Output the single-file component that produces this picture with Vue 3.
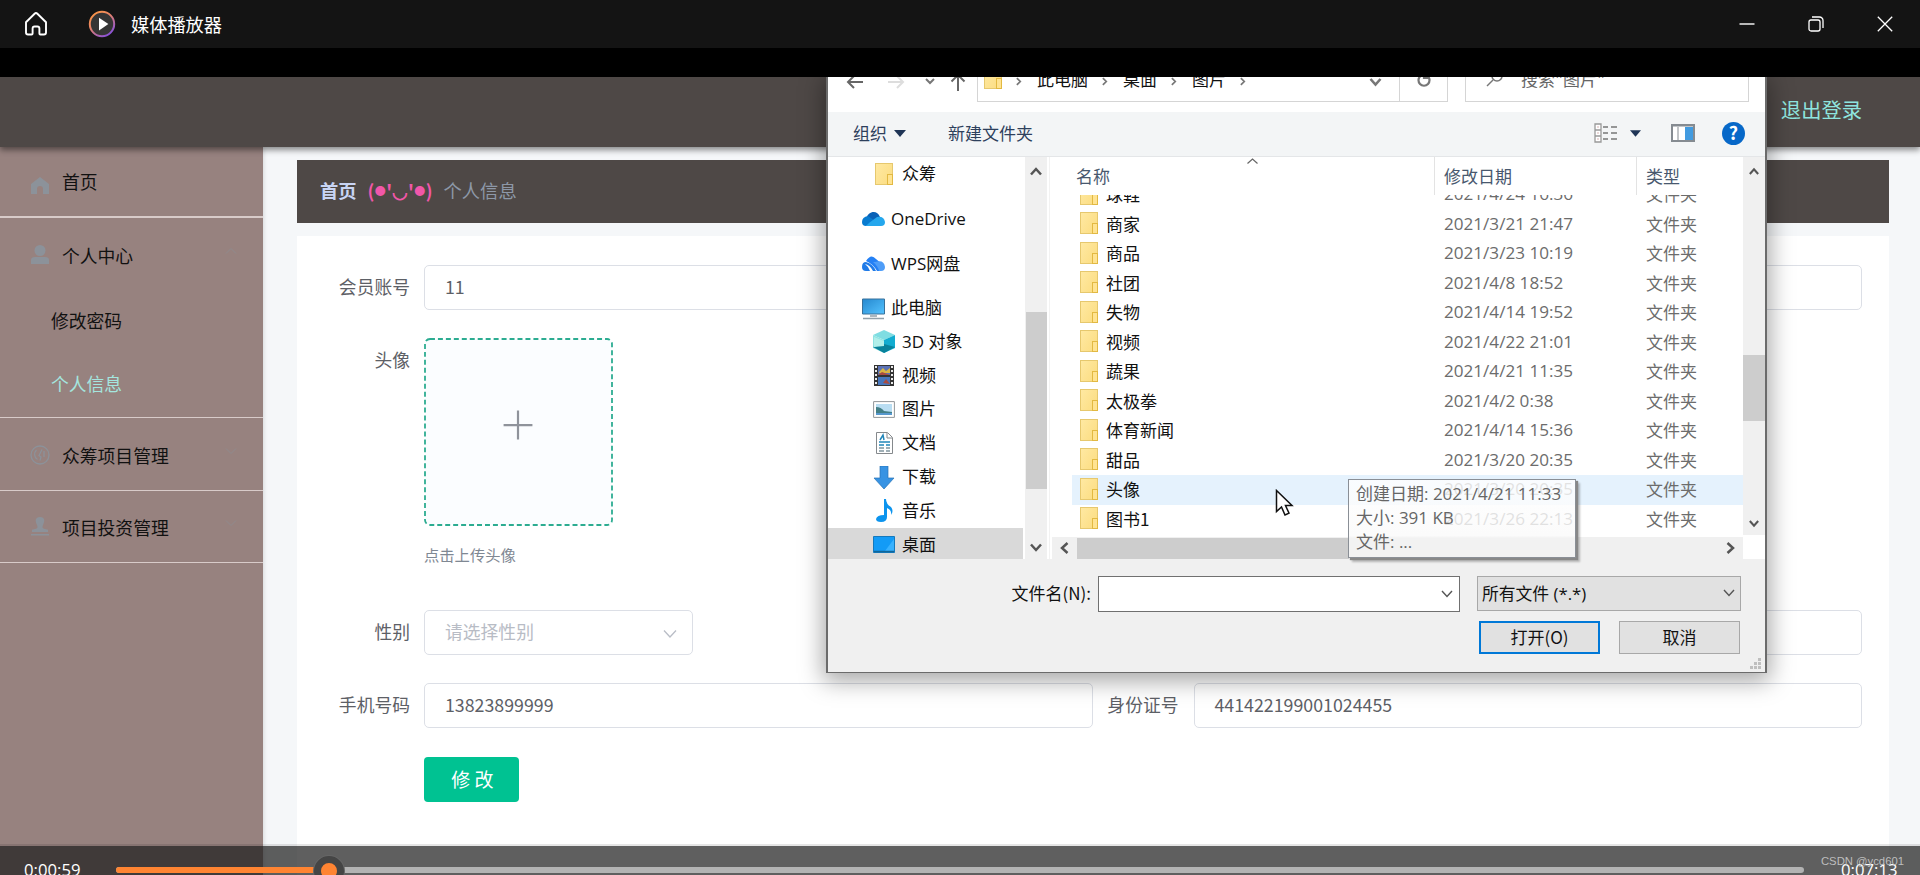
<template>
  <div class="player">
    <div class="title-bar">
      <svg class="home-icon" width="24" height="24" viewBox="0 0 24 24">
        <path d="M2 10.2 10.6 1.8a2 2 0 0 1 2.8 0L22 10.2V20.5a2 2 0 0 1-2 2h-3.6a1 1 0 0 1-1-1v-5a2 2 0 0 0-2-2h-2.8a2 2 0 0 0-2 2v5a1 1 0 0 1-1 1H4a2 2 0 0 1-2-2z" fill="none" stroke="#fff" stroke-width="1.9" />
      </svg>
      <svg class="app-icon" width="28" height="28" viewBox="0 0 28 28">
        <defs>
          <linearGradient id="ring" x1="0" y1="0" x2=".7" y2="1">
            <stop offset="0" stop-color="#ff9a3c" />
            <stop offset=".45" stop-color="#e88468" />
            <stop offset="1" stop-color="#8a52d8" />
          </linearGradient>
        </defs>
        <circle cx="14" cy="14" r="12.2" fill="#353535" stroke="url(#ring)" stroke-width="2" />
        <path d="M11 7.8v12.6l9.4-6.3z" fill="#fff" />
      </svg>
      <span class="app-name">媒体播放器</span>
      <div class="window-buttons">
        <svg width="16" height="16" viewBox="0 0 16 16"><path d="M.5 8h15" stroke="#fff" stroke-width="1.4" /></svg>
        <svg width="16" height="16" viewBox="0 0 16 16" fill="none" stroke="#fff" stroke-width="1.3">
          <rect x="1" y="4" width="11" height="11" rx="2" />
          <path d="M4 1h7.5A3.5 3.5 0 0 1 15 4.5V12" />
        </svg>
        <svg width="16" height="16" viewBox="0 0 16 16"><path d="M.8.8l14.4 14.4M15.2.8.8 15.2" stroke="#fff" stroke-width="1.3" /></svg>
      </div>
    </div>

    <div class="video">
      <header class="top-header">
        <a class="logout">退出登录</a>
      </header>

      <div class="main">
        <aside class="sidebar">
          <div class="menu-item home">
            <svg width="18" height="18" viewBox="0 0 18 18"><path d="M9 1 0 8v10h6v-5a3 3 0 0 1 6 0v5h6V8z" fill="#8c929a" /></svg>
            <span>首页</span>
          </div>
          <div class="menu-group">
            <div class="menu-item center">
              <svg width="18" height="20" viewBox="0 0 18 20" fill="#8c929a"><circle cx="9" cy="5.5" r="5.5" /><path d="M0 19v-4q0-3 4-3h10q4 0 4 3v4z" /></svg>
              <span>个人中心</span>
              <svg class="arrow" width="12" height="8" viewBox="0 0 12 8"><path d="M1 6.5 6 1.5l5 5" fill="none" stroke="#908b8e" /></svg>
            </div>
            <div class="sub-item">修改密码</div>
            <div class="sub-item active">个人信息</div>
          </div>
          <div class="menu-item">
            <svg width="20" height="20" viewBox="0 0 20 20" fill="none" stroke="#8c929a" stroke-width="1.3"><circle cx="10" cy="10" r="9" /><path d="M6.5 5a6 6 0 0 0 1 9.5M12 4.5 9 10.5l2 1.5-1 3.5M14 6v6" /></svg>
            <span>众筹项目管理</span>
            <svg class="arrow" width="12" height="8" viewBox="0 0 12 8"><path d="M1 1.5l5 5 5-5" fill="none" stroke="#908b8e" /></svg>
          </div>
          <div class="menu-item last">
            <svg width="20" height="19" viewBox="0 0 20 19" fill="#8c929a"><path d="M10 0c5 0 5 4 3 8-1 2-.5 3.5 1 3.8l4 1V15H2v-2.2l4-1c1.5-.3 2-1.8 1-3.8C5 4 5 0 10 0zM1 17h18v1.5H1z" /></svg>
            <span>项目投资管理</span>
            <svg class="arrow" width="12" height="8" viewBox="0 0 12 8"><path d="M1 1.5l5 5 5-5" fill="none" stroke="#908b8e" /></svg>
          </div>
        </aside>

        <section class="content">
          <div class="breadcrumb">
            <b>首页</b>
            <span class="face">(<i>●</i>'◡'<i>●</i>)</span>
            <span class="crumb">个人信息</span>
          </div>
          <div class="card">
            <div class="form-row">
              <label>会员账号</label>
              <div class="field">11</div>
              <label></label>
              <div class="field"></div>
            </div>
            <div class="form-row avatar">
              <label>头像</label>
              <div>
                <div class="upload">
                  <svg width="189" height="188" viewBox="0 0 190 189">
                    <rect x="1" y="1" width="188" height="187" rx="5" fill="#fbfdff" stroke="#2cac91" stroke-width="1.8" stroke-dasharray="5 3" />
                    <path d="M80 87.5h29M94.500 73v29" stroke="#8f939b" stroke-width="2.2" />
                  </svg>
                </div>
                <p class="tip">点击上传头像</p>
              </div>
            </div>
            <div class="form-row">
              <label>性别</label>
              <div class="field select">
                <span>请选择性别</span>
                <svg width="14" height="10" viewBox="0 0 14 10"><path d="M1 1.5l6 6.5 6-6.5" fill="none" stroke="#b9bdc6" stroke-width="1.3" /></svg>
              </div>
              <div class="gap"></div>
              <label></label>
              <div class="field"></div>
            </div>
            <div class="form-row phone">
              <label>手机号码</label>
              <div class="field">13823899999</div>
              <label>身份证号</label>
              <div class="field">441422199001024455</div>
            </div>
            <button class="submit">修 改</button>
          </div>
        </section>
      </div>

      <!-- file picker -->
      <div class="dialog">
        <div class="address-row">
          <div class="nav-arrows">
            <svg width="18" height="16" viewBox="0 0 18 16"><path d="M17 8H2M8 2 2 8l6 6" fill="none" stroke="#666" stroke-width="2" /></svg>
            <svg width="18" height="16" viewBox="0 0 18 16"><path d="M1 8h15M10 2l6 6-6 6" fill="none" stroke="#ddd" stroke-width="2" /></svg>
            <svg width="10" height="8" viewBox="0 0 10 8"><path d="M1 1l4 4 4-4" fill="none" stroke="#777" stroke-width="2" /></svg>
            <svg width="16" height="18" viewBox="0 0 16 18"><path d="M8 18V2M1.5 8.5 8 2l6.5 6.5" fill="none" stroke="#666" stroke-width="2" /></svg>
          </div>
          <div class="address">
            <i class="folder"></i>
            <template v-for="part in ['此电脑', '桌面', '图片']" :key="part">
              <svg class="sep" width="6" height="9" viewBox="0 0 7 10"><path d="M1 1l4 4-4 4" fill="none" stroke="#777" stroke-width="2" /></svg>
              <span>{{ part }}</span>
            </template>
            <svg class="sep" width="6" height="9" viewBox="0 0 7 10"><path d="M1 1l4 4-4 4" fill="none" stroke="#777" stroke-width="2" /></svg>
            <svg class="drop" width="13" height="9" viewBox="0 0 12 9"><path d="M1 1l5 5.5L11 1" fill="none" stroke="#777" stroke-width="2.6" /></svg>
            <div class="refresh">
              <svg width="14" height="16" viewBox="0 0 14 16"><path d="M10.5 4a5.500 5.500 0 1 1-7 0M7 0v6h4" fill="none" stroke="#777" stroke-width="2.2" /></svg>
            </div>
          </div>
          <div class="search">
            <svg width="18" height="18" viewBox="0 0 18 18"><path d="M1 17l6-6" stroke="#777" stroke-width="1.5" /><circle cx="11" cy="7" r="5" fill="none" stroke="#777" stroke-width="1.5" /></svg>
            <span>搜索"图片"</span>
          </div>
        </div>

        <div class="toolbar">
          <span>组织</span>
          <svg width="12" height="7" viewBox="0 0 12 7"><path d="M0 0h12L6 7z" fill="#1f3556" /></svg>
          <span class="new-folder">新建文件夹</span>
          <div class="view-tools">
            <svg width="24" height="20" viewBox="0 0 24 20"><path d="M1 1h6v18H1zM1 7h6M1 13h6" fill="#fff" stroke="#999" stroke-width="1.3" /><path d="M9 4h5m3 0h6M9 10h5m3 0h6M9 16h5m3 0h6" stroke="#777" stroke-width="1.5" /><path d="M3.5 9.5h1v1h-1zm0 6h1v1h-1zm0-12h1v1h-1z" fill="#a66" /></svg>
            <svg class="caret" width="11" height="7" viewBox="0 0 12 7"><path d="M0 0h12L6 7z" fill="#1f3556" /></svg>
            <svg class="preview" width="24" height="18" viewBox="0 0 24 18"><path d="M1 1h22v16H1z" fill="#fff" stroke="#858b91" stroke-width="2" /><path d="M14 3h8v13h-8z" fill="#429be0" /><path d="M7 3v14M1 2h22" stroke="#858b91" /></svg>
            <span class="help">?</span>
          </div>
        </div>

        <div class="panes">
          <div class="tree">
            <div v-for="item in places" :key="item.name" class="tree-item" :class="[item.icon, { root: item.root }]">
              <span class="tree-icon">
                <i v-if="item.icon === 'folder-item'" class="folder"></i>
                <svg v-else-if="item.icon === 'onedrive'" width="23" height="16" viewBox="0 0 23 16"><path d="M4 8C6 0 15-2 18 6l-8 5z" fill="#0961b7" /><path d="M0 11q0-5 6-6l10 7-12 3q-4 0-4-4z" fill="#087bd0" /><path d="M7 12l8-6q7-1 8 5 0 4-4 4H4z" fill="#25a7ed" /></svg>
                <svg v-else-if="item.icon === 'wps'" width="23" height="16" viewBox="0 0 23 16"><path d="M4 5Q9-3 14 3l7 6-3 6h-3Q11 8 4 5z" fill="#2480f5" /><path d="M13 6q9-3 10 5 0 4-4 4h-2Q16 10 11 6z" fill="#4e9df8" /><path d="M0 11q0-5 4-5 7 2 10 9h-3Q8 9 3 8q4 3 5 7H4q-4 0-4-4z" fill="#207be8" /></svg>
                <svg v-else-if="item.icon === 'pc'" width="23" height="23" viewBox="0 0 23 23"><defs><linearGradient id="scr" x2="1" y2="1"><stop stop-color="#2588cf" /><stop offset="1" stop-color="#55c3ff" /></linearGradient></defs><path d="M.5 2h22v15H.5z" fill="url(#scr)" stroke="#39719a" /><path d="M8 19h7M1 21.5h21" stroke="#91a0aa" stroke-width="1.5" /></svg>
                <svg v-else-if="item.icon === 'cube'" width="22" height="23" viewBox="0 0 22 23"><path d="M0 5l11-5 11 5-11 5z" fill="#7fdde2" /><path d="M0 5l11 5v13L0 18z" fill="#8fe3e2" /><path d="M22 5l-11 5v13l11-5z" fill="#12acd0" /><path d="M0 17l11-3 11 3-11 6z" fill="#08829b" /><path d="M1 7l10 4v5L1 17z" fill="#b0efea" /></svg>
                <svg v-else-if="item.icon === 'film'" width="20" height="21" viewBox="0 0 20 21"><path d="M0 0h20v21H0z" fill="#343434" /><path d="M4 1h12v9H4z" fill="#5b72b5" /><path d="M4 12h12v8H4z" fill="#4777bd" /><path d="M5 7l4-4 3 3 4-3v5H5z" fill="#d8b544" /><path d="M4 10l4-3 8 3M9 18l3-4 4 5z" fill="#a94b41" /><path d="M2 1v20M18 1v20" stroke="#fff" stroke-width="1.8" stroke-dasharray="2 2" /></svg>
                <svg v-else-if="item.icon === 'picture'" width="22" height="17" viewBox="0 0 22 17"><path d="M.6.6h20.8v15.8H.6z" fill="#fff" stroke="#929699" /><path d="M3 3h16v11H3z" fill="#b9ddf2" /><path d="M3 6q5 0 8 4l8 1v3H3z" fill="#437f86" /><path d="M3 12h16v2H3z" fill="#5798ce" /></svg>
                <svg v-else-if="item.icon === 'doc'" width="17" height="22" viewBox="0 0 17 22"><path d="M.5.5h11l5 5v16H.5z" fill="#fff" stroke="#85898c" /><path d="M11 1v5h5" fill="none" stroke="#85898c" /><path d="M4 8l3-5 1 5M3 10h11M3 13h5m2 0h4" fill="none" stroke="#2286b9" stroke-width="1.5" /><path d="M3 16h5m2 0h4M3 19h5m2 0h4" stroke="#80959e" stroke-width="1.5" /></svg>
                <svg v-else-if="item.icon === 'download'" width="22" height="23" viewBox="0 0 22 23"><path d="M7 0h8v12h6L11 23 1 12h6z" fill="#3793e3" stroke="#2872b5" stroke-width=".7" /></svg>
                <svg v-else-if="item.icon === 'music'" width="17" height="23" viewBox="0 0 17 23"><path d="M8 0h2q0 5 5 8 3 4 0 8 1-5-4-7v9q0 5-6 5-5 0-5-3 1-4 8-4z" fill="#0c94ee" /></svg>
                <svg v-else width="22" height="17" viewBox="0 0 22 17"><path d="M.5.5h21v16H.5z" fill="#139bf6" stroke="#1479bd" /><path d="M12 15 21 3v12z" fill="#38b2ff" /><path d="M1 15.5h20" stroke="#116698" stroke-width="1.5" /></svg>
              </span>
              <span>{{ item.name }}</span>
            </div>
          </div>
          <div class="v-scroll tree-scroll">
            <svg width="12" height="9" viewBox="0 0 12 9"><path d="M1 7.5l5-5.500 5 5.500" fill="none" stroke="#555" stroke-width="2.5" /></svg>
            <i></i>
            <svg width="12" height="9" viewBox="0 0 12 9"><path d="M1 1.5 6 7l5-5.500" fill="none" stroke="#555" stroke-width="2.5" /></svg>
          </div>

          <div class="list">
            <div class="list-head">
              <span class="col-name">名称
                <svg width="11" height="6" viewBox="0 0 11 6"><path d="M.5 5.5l5-4.500 5 4.500" fill="none" stroke="#666" stroke-width="1.2" /></svg>
              </span>
              <span class="col-date">修改日期</span>
              <span class="col-type">类型</span>
            </div>
            <div class="rows">
              <div v-for="file in files" :key="file.name" class="row" :class="{ hover: file.name === '头像' }">
                <span class="cell-name"><i class="folder"></i>{{ file.name }}</span>
                <span class="cell-date">{{ file.date }}</span>
                <span class="cell-type">文件夹</span>
              </div>
            </div>
            <div class="h-scroll">
              <svg width="9" height="12" viewBox="0 0 9 12"><path d="M7.5 1 2 6l5.500 5" fill="none" stroke="#555" stroke-width="2.5" /></svg>
              <i></i>
              <svg width="9" height="12" viewBox="0 0 9 12"><path d="M1.5 1 7 6l-5.500 5" fill="none" stroke="#555" stroke-width="2.5" /></svg>
            </div>
          </div>
          <div class="v-scroll list-scroll">
            <svg width="10" height="9" viewBox="0 0 12 9"><path d="M1 7.5l5-5.500 5 5.500" fill="none" stroke="#555" stroke-width="2.5" /></svg>
            <i></i>
            <svg width="10" height="9" viewBox="0 0 12 9"><path d="M1 1.5 6 7l5-5.500" fill="none" stroke="#555" stroke-width="2.5" /></svg>
          </div>
        </div>

        <div class="dialog-footer">
          <div class="file-line">
            <label>文件名(N):</label>
            <div class="combo">
              <svg width="12" height="8" viewBox="0 0 12 8"><path d="M1 1l5 5.500L11 1" fill="none" stroke="#555" stroke-width="1.4" /></svg>
            </div>
            <div class="combo type">
              <span>所有文件 (*.*)</span>
              <svg width="12" height="8" viewBox="0 0 12 8"><path d="M1 1l5 5.500L11 1" fill="none" stroke="#555" stroke-width="1.4" /></svg>
            </div>
          </div>
          <div class="buttons">
            <button class="open">打开(O)</button>
            <button>取消</button>
          </div>
          <svg class="grip" width="12" height="12" viewBox="0 0 12 12"><path d="M8 0h3v3H8zM8 4h3v3H8zM8 8h3v3H8zM4 4h3v3H4zM4 8h3v3H4zM0 8h3v3H0z" fill="#bfbfbf" /></svg>
        </div>

        <div class="tooltip">
          <p>创建日期: 2021/4/21 11:33</p>
          <p>大小: 391 KB</p>
          <p>文件: ...</p>
        </div>
        <svg class="cursor" width="19" height="28" viewBox="0 0 19 28"><path d="M1.5 1.5v21l5-4.500 3.500 8 4-1.800-3.500-7.700H17z" fill="#fff" stroke="#111" stroke-width="1.5" /></svg>
      </div>
    </div>

    <div class="controls">
      <span class="time">0:00:59</span>
      <div class="track">
        <div class="played" :style="{ width: progress + '%' }"><i class="knob"></i></div>
      </div>
      <span class="time">0:07:13</span>
      <span class="watermark">CSDN @ycd601</span>
    </div>
  </div>
</template>

<script setup>
import { computed } from 'vue';

const played = 213;
const trackWidth = 1688;
const progress = computed(() => (played / trackWidth) * 100);

const places = [
  { name: '众筹', icon: 'folder-item' },
  { name: 'OneDrive', icon: 'onedrive', root: true },
  { name: 'WPS网盘', icon: 'wps', root: true },
  { name: '此电脑', icon: 'pc', root: true },
  { name: '3D 对象', icon: 'cube' },
  { name: '视频', icon: 'film' },
  { name: '图片', icon: 'picture' },
  { name: '文档', icon: 'doc' },
  { name: '下载', icon: 'download' },
  { name: '音乐', icon: 'music' },
  { name: '桌面', icon: 'desktop' },
];

const files = [
  { name: '球鞋', date: '2021/4/24 16:36' },
  { name: '商家', date: '2021/3/21 21:47' },
  { name: '商品', date: '2021/3/23 10:19' },
  { name: '社团', date: '2021/4/8 18:52' },
  { name: '失物', date: '2021/4/14 19:52' },
  { name: '视频', date: '2021/4/22 21:01' },
  { name: '蔬果', date: '2021/4/21 11:35' },
  { name: '太极拳', date: '2021/4/2 0:38' },
  { name: '体育新闻', date: '2021/4/14 15:36' },
  { name: '甜品', date: '2021/3/20 20:35' },
  { name: '头像', date: '2021/3/20 20:35' },
  { name: '图书1', date: '2021/3/26 22:13' },
];
</script>

<style>
body {
  margin: 0;
  overflow: hidden;
  background: #000;
}
</style>

<style scoped>
* {
  box-sizing: border-box;
}

svg {
  display: block;
  flex-shrink: 0;
}

p {
  margin: 0;
}

.player {
  position: relative;
  width: 1920px;
  height: 875px;
  overflow: hidden;
  display: flex;
  flex-direction: column;
  background: #000;
  font-family: "Noto Sans CJK SC", sans-serif;
  font-size: 17.8px;
  white-space: nowrap;
}

.title-bar {
  height: 48px;
  margin-bottom: 29px;
  padding: 0 27px 0 24px;
  display: flex;
  align-items: center;
  background: #141414;
  color: #fff;
}

.app-icon {
  margin-left: 40px;
}

.app-name {
  margin-left: 15px;
  font-size: 18.2px;
}

.window-buttons {
  display: flex;
  gap: 53px;
  margin-left: auto;
}

.video {
  position: relative;
  height: 798px;
  overflow: hidden;
}

.top-header {
  position: relative;
  z-index: 1;
  height: 70px;
  padding: 0 58px 7px 0;
  display: flex;
  align-items: center;
  justify-content: flex-end;
  background: #4e4846;
  box-shadow: 0 3px 6px rgba(0, 0, 0, 0.45);
}

.logout {
  color: #8ee5df;
  font-size: 20.3px;
}

.main {
  display: flex;
  height: 728px;
  background: #f5f7f9;
}

.sidebar {
  width: 263px;
  background: #97827f;
  color: #111;
  box-shadow: 1px 0 4px rgba(0, 0, 0, 0.12);
}

.menu-item {
  height: 72.5px;
  padding: 3px 26px 0 30px;
  display: flex;
  align-items: center;
  border-bottom: 1px solid #d8cbc9;
}

.menu-item.last {
  padding-top: 1px;
}

.menu-item span {
  margin-left: 12px;
}

.menu-item.home {
  height: 71px;
  padding: 0 26px 2px 31px;
  border-bottom: 2px solid #d8cbc9;
}

.menu-item.home svg {
  margin-top: 8px;
}

.menu-item.home span {
  margin-left: 13px;
}

.menu-group {
  border-bottom: 1px solid #d8cbc9;
}

.menu-item.center {
  height: 70px;
  padding: 4px 26px 0 31px;
  border: none;
}

.menu-item.center span {
  margin-left: 13px;
}

.menu-item .arrow {
  margin: -8px 0 0 auto;
}

.sub-item {
  height: 64px;
  padding-left: 51px;
  line-height: 64px;
}

.sub-item.active {
  height: 65px;
  line-height: 63px;
  color: #a4e6df;
}

.content {
  width: 1592px;
  margin: 13px 0 0 34px;
}

.breadcrumb {
  height: 63px;
  margin-bottom: 13px;
  padding: 0 0 3px 23px;
  display: flex;
  align-items: center;
  background: #4e4846;
  font-size: 18.3px;
}

.breadcrumb b {
  color: #c8d4f4;
}

.face {
  display: flex;
  align-items: center;
  justify-content: space-between;
  width: 65px;
  margin: 0 11px 0 11px;
  color: #f157a9;
  font-weight: bold;
  font-size: 18px;
}

.face i {
  font-style: normal;
  font-size: 11px;
}

.crumb {
  color: #8d98a8;
}

.card {
  height: 650px;
  padding: 29px 27px 0 27px;
  background: #fff;
}

.form-row {
  display: flex;
  height: 45px;
  margin-bottom: 28px;
  color: #5d6066;
}

.form-row label {
  width: 100px;
  padding-right: 14px;
  line-height: 42px;
  text-align: right;
  flex-shrink: 0;
}

.form-row label ~ label {
  width: 101px;
  padding-right: 15px;
}

.field {
  flex: 1;
  height: 45px;
  padding: 0 20px;
  line-height: 41px;
  border: 1.5px solid #dcdfe6;
  border-radius: 5px;
  background: #fff;
}

.form-row.avatar {
  height: 243px;
  margin-bottom: 29px;
}

.form-row.phone {
  margin-bottom: 29px;
}

.form-row.phone .field {
  font-size: 17.8px;
}

.upload {
  width: 190px;
  height: 188px;
}

.tip {
  margin-top: 16px;
  font-size: 15.3px;
  line-height: 24px;
  color: #7f8893;
}

.field.select {
  flex: none;
  width: 269px;
  padding: 0 15px 3px 20px;
  display: flex;
  align-items: center;
  justify-content: space-between;
  color: #b8bcc5;
}

.select svg {
  margin-top: 6px;
}

.gap {
  width: 400px;
}

.submit {
  display: block;
  width: 95px;
  height: 45px;
  margin-left: 100px;
  padding: 0 0 3px 2px;
  border: none;
  border-radius: 4px;
  background: #00c292;
  color: #fff;
  font: 19px "Noto Sans CJK SC", sans-serif;
}

.dialog {
  position: absolute;
  z-index: 2;
  top: -1px;
  left: 826px;
  width: 941px;
  height: 597px;
  display: flex;
  flex-direction: column;
  background: #fff;
  border: 2px solid #6b6b6b;
  border-top: 1px solid #fff;
  border-bottom-width: 1px;
  box-shadow: 0 5px 22px 3px rgba(0, 0, 0, 0.35);
  color: #111;
  font-size: 17px;
}

.address-row {
  height: 35px;
  padding: 0 16px 10px 18px;
  display: flex;
  align-items: flex-end;
  flex-shrink: 0;
  clip-path: inset(0);
}

.nav-arrows {
  width: 131px;
  height: 40px;
  display: flex;
  align-items: center;
  gap: 23px;
}

.nav-arrows svg:nth-child(2) {
  margin-right: -3px;
}

.nav-arrows svg:nth-child(4) {
  margin-left: -8px;
}

.address {
  width: 471px;
  height: 48px;
  padding-left: 6px;
  display: flex;
  align-items: center;
  border: 1px solid #d5d5d5;
}

.address span {
  height: 27px;
  line-height: 27px;
}

.address .sep {
  margin: 6px 15px 0 14px;
}

.address .drop {
  margin: 8px 17px 0 auto;
}

.refresh {
  width: 48px;
  height: 48px;
  padding-top: 4px;
  display: flex;
  align-items: center;
  justify-content: center;
  border-left: 1px solid #d5d5d5;
}

.search {
  width: 284px;
  height: 48px;
  margin-left: auto;
  padding-left: 20px;
  display: flex;
  align-items: center;
  border: 1px solid #d5d5d5;
  color: #666;
}

.search span {
  margin-left: 17px;
}

.folder {
  position: relative;
  display: inline-block;
  width: 18px;
  height: 22px;
  border: 1px solid #e6c86e;
  background: linear-gradient(120deg, #ffe9a2, #fbdc80);
  flex-shrink: 0;
}

.folder::after {
  content: "";
  position: absolute;
  right: -1px;
  bottom: -1px;
  width: 4px;
  height: 9px;
  border: 1px solid #e2b942;
  background: #ffe391;
}

.toolbar {
  height: 45px;
  padding: 0 20px 2px 25px;
  display: flex;
  align-items: center;
  flex-shrink: 0;
  background: #f3f5f6;
  border-bottom: 1px solid #e4e6e8;
  color: #2d405c;
}

.toolbar > span {
  margin-top: -2px;
}

.toolbar > svg {
  margin-left: 7px;
}

.toolbar .new-folder {
  margin-left: 42px;
}

.view-tools {
  display: flex;
  align-items: center;
  margin-left: auto;
}

.caret {
  margin-left: 12px;
}

.preview {
  margin-left: 30px;
}

.help {
  width: 23px;
  height: 23px;
  margin-left: 27px;
  border-radius: 50%;
  background: #0768c8;
  color: #fff;
  font-weight: bold;
  font-size: 18px;
  line-height: 21px;
  text-align: center;
}

.panes {
  display: flex;
  height: 402px;
  flex-shrink: 0;
}

.tree {
  width: 195px;
  overflow: hidden;
  font-family: "Open Sans", "Noto Sans CJK SC", sans-serif;
  line-height: 24px;
}

.tree-item {
  height: 33.8px;
  padding-left: 45px;
  display: flex;
  align-items: center;
}

.tree-item.root {
  height: 45px;
  padding-left: 34px;
}

.tree-icon {
  width: 22px;
  margin-right: 7px;
  display: flex;
  justify-content: center;
}

.tree-item.pc {
  height: 44px;
  margin-bottom: -5px;
}

.tree-item.desktop {
  background: #d9d9d9;
}

.tree-item.folder-item {
  height: 39px;
  padding-bottom: 6px;
}

.v-scroll {
  display: flex;
  flex-direction: column;
  align-items: center;
  background: #f0f0f0;
  padding: 10px 0 7px;
}

.v-scroll svg:last-child {
  margin-top: auto;
}

.v-scroll i,
.h-scroll i {
  background: #cdcdcd;
}

.tree-scroll {
  width: 22px;
  margin-left: 2px;
}

.tree-scroll i {
  width: 21px;
  height: 177px;
  margin-top: 136px;
}

.list {
  width: 694px;
  margin-left: 2px;
  border-left: 1px solid #f2f2f2;
}

.list-head {
  display: flex;
  height: 38px;
  color: #48586e;
  line-height: 37px;
}

.col-name {
  position: relative;
  width: 385px;
  padding-left: 26px;
  border-right: 1px solid #e3e3e3;
}

.col-name svg {
  position: absolute;
  top: 1px;
  left: 197px;
}

.col-date {
  width: 202px;
  padding-left: 9px;
  border-right: 1px solid #e3e3e3;
}

.col-type {
  padding-left: 9px;
}

.rows {
  height: 342px;
  overflow: hidden;
}

.row {
  display: flex;
  align-items: center;
  height: 29.5px;
  margin-left: 22px;
  padding: 0 0 2px 8px;
}

.row:first-child {
  margin-top: -14.8px;
}

.row.hover {
  background: #e5f2fd;
}

.cell-name {
  display: flex;
  align-items: center;
  width: 364px;
}

.cell-name .folder {
  margin-right: 8px;
}

.cell-date {
  width: 202px;
  color: #6c6c6c;
  font-family: "Open Sans", sans-serif;
  font-size: 17.1px;
}

.cell-type {
  color: #6c6c6c;
}

.h-scroll {
  display: flex;
  align-items: center;
  height: 22px;
  margin-left: 2px;
  padding: 0 8px 0 8px;
  background: #f0f0f0;
}

.h-scroll i {
  width: 272px;
  height: 21px;
  margin-left: 8px;
}

.h-scroll svg:last-child {
  margin-left: auto;
}

.list-scroll {
  width: 22px;
  height: 378px;
}

.list-scroll i {
  width: 22px;
  height: 66px;
  margin-top: 179px;
}

.dialog-footer {
  position: relative;
  flex: 1;
  padding: 17px 24px 0 0;
  background: #f0f0f0;
}

.file-line {
  display: flex;
  justify-content: flex-end;
}

.file-line label {
  margin-right: 7px;
  line-height: 34px;
}

.combo {
  display: flex;
  align-items: center;
  justify-content: flex-end;
  width: 362px;
  height: 36px;
  padding-right: 6px;
  border: 1px solid #707070;
  background: #fff;
}

.combo.type {
  width: 264px;
  height: 35px;
  margin-left: 17px;
  padding: 0 5px 1px 4px;
  justify-content: space-between;
  border-color: #a8a8a8;
  background: #e1e1e1;
  font-family: "Open Sans", "Noto Sans CJK SC", sans-serif;
  font-size: 16.8px;
}

.buttons {
  display: flex;
  justify-content: flex-end;
  gap: 19px;
  margin-top: 9px;
  padding-right: 1px;
}

.buttons button {
  width: 121px;
  height: 33px;
  padding: 0 0 2px;
  border: 1px solid #a8a8a8;
  background: #e1e1e1;
  font: 17px "Noto Sans CJK SC", sans-serif;
  color: #111;
}

.buttons .open {
  border: 2px solid #0078d7;
}

.grip {
  position: absolute;
  right: 3px;
  bottom: 2px;
}

.tooltip {
  position: absolute;
  top: 402px;
  left: 520px;
  width: 228px;
  height: 79px;
  padding: 2px 7px;
  border: 1px solid #8a8f96;
  background: linear-gradient(rgba(255, 255, 255, 0.8), rgba(250, 250, 250, 0.82) 72%, #f2f2f2 76%);
  box-shadow: 2px 2px 1px #888, 4px 4px 2px rgba(0, 0, 0, 0.25);
  color: #666;
  font-family: "Open Sans", "Noto Sans CJK SC", sans-serif;
  line-height: 24px;
}

.cursor {
  position: absolute;
  top: 412px;
  left: 447px;
}

.controls {
  position: absolute;
  z-index: 5;
  left: 0;
  right: 0;
  bottom: 0;
  height: 29px;
  padding-left: 24px;
  display: flex;
  background: rgba(27, 27, 27, 0.7);
  box-shadow: 0 -2px 0 rgba(0, 0, 0, 0.1);
  color: #fff;
}

.time {
  width: 92px;
  flex-shrink: 0;
  padding-top: 12px;
  font-family: "Open Sans", sans-serif;
  font-size: 16.7px;
  line-height: 24px;
}

.track {
  width: 1688px;
  height: 6px;
  flex-shrink: 0;
  margin-top: 21px;
  border-radius: 3px;
  background: #b3b3b3;
}

.track + .time {
  width: 60px;
  margin-left: 37px;
}

.played {
  position: relative;
  height: 6px;
  border-radius: 3px;
  background: #ff8432;
}

.knob {
  position: absolute;
  top: -11px;
  right: -15px;
  width: 30px;
  height: 30px;
  border: 7px solid #454545;
  border-radius: 50%;
  background: #ff8432;
  box-shadow: 0 0 0 1px #666;
}

.watermark {
  position: absolute;
  top: 6px;
  right: 16px;
  font-family: "Liberation Sans", sans-serif;
  font-size: 11.3px;
  line-height: 18px;
  color: #bdbdbd;
}
</style>
